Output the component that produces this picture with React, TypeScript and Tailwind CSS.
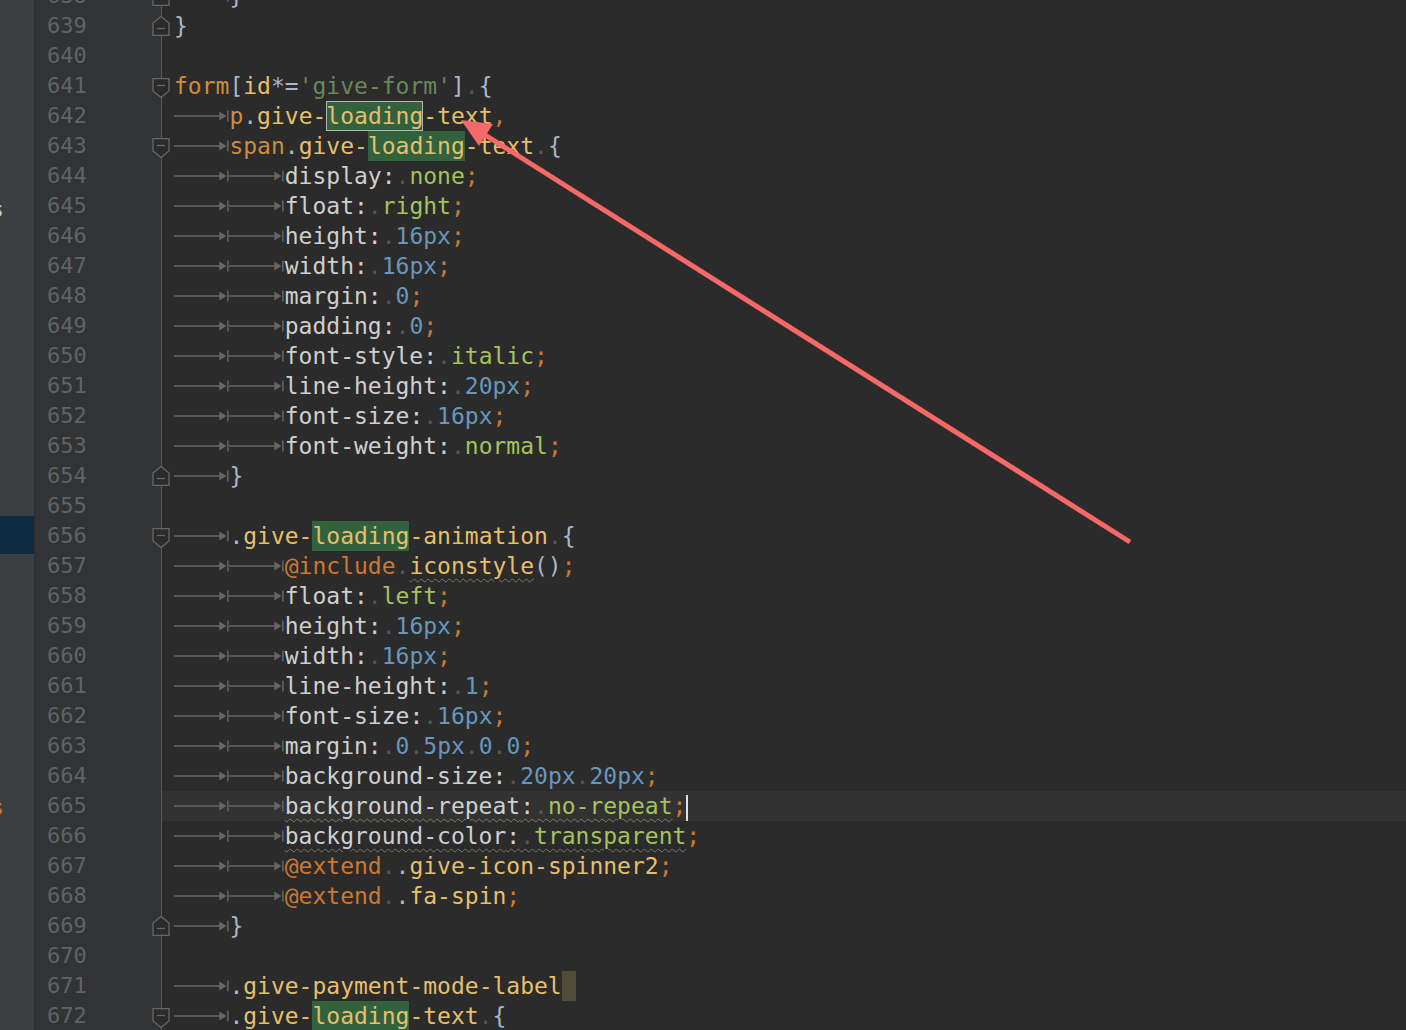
import React from 'react';

// palette of the editor theme
const TAG = 'text-[#cf8c3e]';
const CLS = 'text-[#e6bf6c]';
const PUN = 'text-[#cc7832]';
const BR = 'text-[#a9b7c6]';
const STR = 'text-[#6a8759]';
const PROP = 'text-[#cfcfcf]';
const VAL = 'text-[#a5c25c]';
const NUM = 'text-[#6897bb]';
const WAVY = 'underline decoration-wavy decoration-[#77776a] decoration-1 underline-offset-[4px]';

const S = ({ c, children }: { c: string; children: React.ReactNode }) => <span className={c}>{children}</span>;

const Sp = () => <span className="text-[#555555]">.</span>;

const Tab = () => (
  <span className="inline-block w-[4ch] h-[30px] align-top">
    <svg viewBox="0 0 55 30" className="w-full h-full" preserveAspectRatio="none">
      <line x1="-1" y1="15" x2="50" y2="15" stroke="#666666" strokeWidth="1.5" />
      <path d="M45 10.5 L52 15 L45 19.5 Z" fill="#666666" />
      <line x1="53.5" y1="9.5" x2="53.5" y2="20.5" stroke="#666666" strokeWidth="1.5" />
    </svg>
  </span>
);

const Hl = ({ box }: { box?: boolean }) => (
  <span
    className={`inline-block h-[30px] align-top bg-[#32623d] ${CLS} ${box ? 'outline outline-1 outline-[#b4b4b4] -outline-offset-1' : ''}`}
  >
    loading
  </span>
);

const Fold = ({ kind }: { kind: 'open' | 'close' }) =>
  kind === 'open' ? (
    <svg className="absolute left-[-10px] top-[7px] w-[18px] h-[20px]" viewBox="0 0 18 20">
      <path d="M1 0.5 H17 V13 L9 19.5 L1 13 Z" fill="#2b2b2b" stroke="#666666" strokeWidth="1.3" />
      <path d="M5 7.5 H13" stroke="#666666" strokeWidth="1.3" />
    </svg>
  ) : (
    <svg className="absolute left-[-10px] top-[5px] w-[18px] h-[20px]" viewBox="0 0 18 20">
      <path d="M1 19.5 H17 V7 L9 0.5 L1 7 Z" fill="#2b2b2b" stroke="#666666" strokeWidth="1.3" />
      <path d="M5 12.5 H13" stroke="#666666" strokeWidth="1.3" />
    </svg>
  );

const Row = ({
  n,
  fold,
  hl,
  children,
}: {
  n: number;
  fold?: 'open' | 'close';
  hl?: boolean;
  children?: React.ReactNode;
}) => (
  <div className="flex h-[30px] shrink-0">
    <div className="w-[126px] pl-[12px] bg-[#313335] text-[22px] leading-[30px] text-[#606366]">{n}</div>
    <div className={`relative flex-1 border-l border-[#5a5a5a] pl-[12px] whitespace-pre ${hl ? 'bg-[#323232]' : ''}`}>
      {fold && <Fold kind={fold} />}
      {children}
    </div>
  </div>
);

const Prop = ({ name, children, wavy }: { name: string; children: React.ReactNode; wavy?: boolean }) => (
  <>
    <Tab />
    <Tab />
    {wavy ? (
      <span className={WAVY}>
        <S c={PROP}>{name}:</S>
        <Sp />
        {children}
      </span>
    ) : (
      <>
        <S c={PROP}>{name}:</S>
        <Sp />
        {children}
      </>
    )}
    <S c={PUN}>;</S>
  </>
);

const Px = ({ v }: { v: string }) => <S c={NUM}>{v}</S>;

export default function App() {
  return (
    <div
      className="relative flex h-[1030px] w-full overflow-hidden bg-[#2b2b2b] text-[23px] leading-[30px]"
      style={{ fontFamily: '"DejaVu Sans Mono", "Liberation Mono", monospace' }}
    >
      {/* project panel edge */}
      <div className="w-[35px] shrink-0 flex flex-col bg-[#3c3f41] border-r border-[#2b2b2b] overflow-hidden">
        <div className="mt-[194px] -ml-[9px] text-[#c8c8c8]" style={{ fontFamily: '"Liberation Sans", sans-serif' }}>
          s
        </div>
        <div className="mt-[292px] h-[38px] bg-[#0d2a40]" />
        <div className="mt-[238px] -ml-[9px] text-[#cc7832]" style={{ fontFamily: '"Liberation Sans", sans-serif' }}>
          s
        </div>
      </div>

      {/* editor */}
      <div className="flex-1 flex flex-col -mt-[19px]">
        <Row n={638} fold="close">
          <Tab />
          <S c={BR}>{'}'}</S>
        </Row>
        <Row n={639} fold="close">
          <S c={BR}>{'}'}</S>
        </Row>
        <Row n={640} />
        <Row n={641} fold="open">
          <S c={TAG}>form</S>
          <S c={BR}>[</S>
          <S c={CLS}>id</S>
          <S c={BR}>*=</S>
          <S c={STR}>'give-form'</S>
          <S c={BR}>]</S>
          <Sp />
          <S c={BR}>{'{'}</S>
        </Row>
        <Row n={642}>
          <Tab />
          <S c={TAG}>p</S>
          <S c={BR}>.</S>
          <S c={CLS}>give-</S>
          <Hl box />
          <S c={CLS}>-text</S>
          <S c={PUN}>,</S>
        </Row>
        <Row n={643} fold="open">
          <Tab />
          <S c={TAG}>span</S>
          <S c={BR}>.</S>
          <S c={CLS}>give-</S>
          <Hl />
          <S c={CLS}>-text</S>
          <Sp />
          <S c={BR}>{'{'}</S>
        </Row>
        <Row n={644}>
          <Prop name="display">
            <S c={VAL}>none</S>
          </Prop>
        </Row>
        <Row n={645}>
          <Prop name="float">
            <S c={VAL}>right</S>
          </Prop>
        </Row>
        <Row n={646}>
          <Prop name="height">
            <Px v="16px" />
          </Prop>
        </Row>
        <Row n={647}>
          <Prop name="width">
            <Px v="16px" />
          </Prop>
        </Row>
        <Row n={648}>
          <Prop name="margin">
            <Px v="0" />
          </Prop>
        </Row>
        <Row n={649}>
          <Prop name="padding">
            <Px v="0" />
          </Prop>
        </Row>
        <Row n={650}>
          <Prop name="font-style">
            <S c={VAL}>italic</S>
          </Prop>
        </Row>
        <Row n={651}>
          <Prop name="line-height">
            <Px v="20px" />
          </Prop>
        </Row>
        <Row n={652}>
          <Prop name="font-size">
            <Px v="16px" />
          </Prop>
        </Row>
        <Row n={653}>
          <Prop name="font-weight">
            <S c={VAL}>normal</S>
          </Prop>
        </Row>
        <Row n={654} fold="close">
          <Tab />
          <S c={BR}>{'}'}</S>
        </Row>
        <Row n={655} />
        <Row n={656} fold="open">
          <Tab />
          <S c={BR}>.</S>
          <S c={CLS}>give-</S>
          <Hl />
          <S c={CLS}>-animation</S>
          <Sp />
          <S c={BR}>{'{'}</S>
        </Row>
        <Row n={657}>
          <Tab />
          <Tab />
          <S c={PUN}>@include</S>
          <Sp />
          <span className={`${CLS} ${WAVY}`}>iconstyle</span>
          <S c={BR}>()</S>
          <S c={PUN}>;</S>
        </Row>
        <Row n={658}>
          <Prop name="float">
            <S c={VAL}>left</S>
          </Prop>
        </Row>
        <Row n={659}>
          <Prop name="height">
            <Px v="16px" />
          </Prop>
        </Row>
        <Row n={660}>
          <Prop name="width">
            <Px v="16px" />
          </Prop>
        </Row>
        <Row n={661}>
          <Prop name="line-height">
            <Px v="1" />
          </Prop>
        </Row>
        <Row n={662}>
          <Prop name="font-size">
            <Px v="16px" />
          </Prop>
        </Row>
        <Row n={663}>
          <Prop name="margin">
            <Px v="0" />
            <Sp />
            <Px v="5px" />
            <Sp />
            <Px v="0" />
            <Sp />
            <Px v="0" />
          </Prop>
        </Row>
        <Row n={664}>
          <Prop name="background-size">
            <Px v="20px" />
            <Sp />
            <Px v="20px" />
          </Prop>
        </Row>
        <Row n={665} hl>
          <Prop name="background-repeat" wavy>
            <S c={VAL}>no-repeat</S>
          </Prop>
          <span className="inline-block w-[2px] h-[26px] bg-[#e0e0e0] align-middle" />
        </Row>
        <Row n={666}>
          <Prop name="background-color" wavy>
            <S c={VAL}>transparent</S>
          </Prop>
        </Row>
        <Row n={667}>
          <Tab />
          <Tab />
          <S c={PUN}>@extend</S>
          <Sp />
          <S c={BR}>.</S>
          <S c={CLS}>give-icon-spinner2</S>
          <S c={PUN}>;</S>
        </Row>
        <Row n={668}>
          <Tab />
          <Tab />
          <S c={PUN}>@extend</S>
          <Sp />
          <S c={BR}>.</S>
          <S c={CLS}>fa-spin</S>
          <S c={PUN}>;</S>
        </Row>
        <Row n={669} fold="close">
          <Tab />
          <S c={BR}>{'}'}</S>
        </Row>
        <Row n={670} />
        <Row n={671}>
          <Tab />
          <S c={BR}>.</S>
          <S c={CLS}>give-payment-mode-label</S>
          <span className="inline-block w-[14px] h-[30px] align-top bg-[#4f4d37]" />
        </Row>
        <Row n={672} fold="open">
          <Tab />
          <S c={BR}>.</S>
          <S c={CLS}>give-</S>
          <Hl />
          <S c={CLS}>-text</S>
          <Sp />
          <S c={BR}>{'{'}</S>
        </Row>
      </div>

      {/* annotation arrow */}
      <svg className="absolute inset-0 pointer-events-none" width="1406" height="1030" viewBox="0 0 1406 1030">
        <line x1="1130" y1="542" x2="482" y2="133" stroke="#f76868" strokeWidth="5" />
        <path d="M461 120 L479 146 L493 124 Z" fill="#f76868" />
      </svg>
    </div>
  );
}
